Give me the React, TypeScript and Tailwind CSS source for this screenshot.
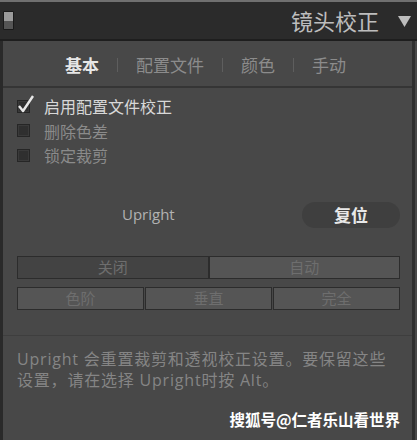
import React from "react";

const cjk = '"Noto Sans CJK SC", "Noto Sans", sans-serif';
const latin = '"Open Sans", "Noto Sans CJK SC", sans-serif';

const Check = ({ on }: { on?: boolean }) => (
  <span className="relative inline-block w-[13px] h-[13px] bg-[#2f2f2f] border border-[#262626] shadow-[inset_0_0_0_1px_#3a3a3a]">
    {on && (
      <svg
        className="absolute -left-[1px] -top-[7px]"
        width="18"
        height="20"
        viewBox="0 0 18 20"
      >
        <path
          d="M2 12 L6 17 L16 2"
          fill="none"
          stroke="#e8e8e8"
          strokeWidth="2.4"
          strokeLinejoin="round"
        />
      </svg>
    )}
  </span>
);

const Row = ({ label, on }: { label: string; on?: boolean }) => (
  <div className="flex items-center gap-[14px] h-[24.5px]">
    <Check on={on} />
    <span className={on ? "text-[#d8d8d8]" : "text-[#8b8b8b]"}>{label}</span>
  </div>
);

const Seg = ({ label, dark }: { label: string; dark?: boolean }) => (
  <div
    className={
      "flex-1 flex items-center justify-center h-[23px] border border-[#2c2c2c] text-[#6e6e6e] text-[15px] " +
      (dark ? "bg-[#434343]" : "bg-[#555555]")
    }
  >
    {label}
  </div>
);

export default function App() {
  return (
    <div
      className="w-[417px] h-[440px] bg-[#484848] flex flex-col overflow-hidden"
      style={{ fontFamily: cjk }}
    >
      <div className="h-[2px] bg-[#707070]" />
      <div className="h-[39px] bg-[#2b2b2b] flex items-center pl-[3px] pr-[6px] border-b-2 border-[#1e1e1e]">
        <span className="flex flex-col w-[11px] h-[19px] border border-[#1a1a1a] rounded-[1px]">
          <span className="flex-1 bg-[#9a9a9a]" />
          <span className="flex-1 bg-[#555555]" />
        </span>
        <span className="ml-auto text-[22px] text-[#bdbdbd]">镜头校正</span>
        <svg className="ml-[19px]" width="13" height="12" viewBox="0 0 13 12">
          <path d="M0 1 H13 L6.5 12 Z" fill="#bdbdbd" />
        </svg>
      </div>

      <div className="flex-1 flex flex-col border-l-[3px] border-r-[3px] border-l-[#2a2a2a] border-r-[#2f2f2f] mr-[2px]">
        <div className="h-[47px] flex items-center justify-center gap-[18px] text-[17px] text-[#8c8c8c] border-b-2 border-[#353535] pr-[4px] pt-[3px]">
          <span className="text-[#e6e6e6] font-bold">基本</span>
          <span className="w-px h-[14px] bg-[#5e5e5e]" />
          <span>配置文件</span>
          <span className="w-px h-[14px] bg-[#5e5e5e]" />
          <span>颜色</span>
          <span className="w-px h-[14px] bg-[#5e5e5e]" />
          <span>手动</span>
        </div>

        <div className="flex flex-col pt-[6px] pl-[14px] text-[16px]">
          <Row label="启用配置文件校正" on />
          <Row label="删除色差" />
          <Row label="锁定裁剪" />
        </div>

        <div className="flex items-center mt-[34px] pl-[119px] pr-[12px]">
          <span className="text-[15px] text-[#b2b2b2]" style={{ fontFamily: latin }}>
            Upright
          </span>
          <span className="ml-auto w-[98px] h-[26px] rounded-full bg-[#3f3f3f] flex items-center justify-center text-[17px] font-bold text-[#e8e8e8]">
            复位
          </span>
        </div>

        <div className="flex flex-col gap-[8px] mt-[28px] pl-[14px] pr-[12px]">
          <div className="flex">
            <Seg label="关闭" dark />
            <Seg label="自动" />
          </div>
          <div className="flex gap-[1px]">
            <Seg label="色阶" />
            <Seg label="垂直" />
            <Seg label="完全" />
          </div>
        </div>

        <div className="mt-[25px] border-t border-[#3e3e3e]" />
        <p
          className="pt-[13px] pl-[14px] pr-[10px] text-[16px] leading-[21px] tracking-[0.8px] text-[#858585]"
          style={{ fontFamily: latin }}
        >
          Upright 会重置裁剪和透视校正设置。要保留这些设置，请在选择 Upright时按 Alt。
        </p>
        <div className="mt-auto mb-[9px] self-end pr-[12px] text-[15.5px] font-bold text-white">
          搜狐号@仁者乐山看世界
        </div>
      </div>
    </div>
  );
}
